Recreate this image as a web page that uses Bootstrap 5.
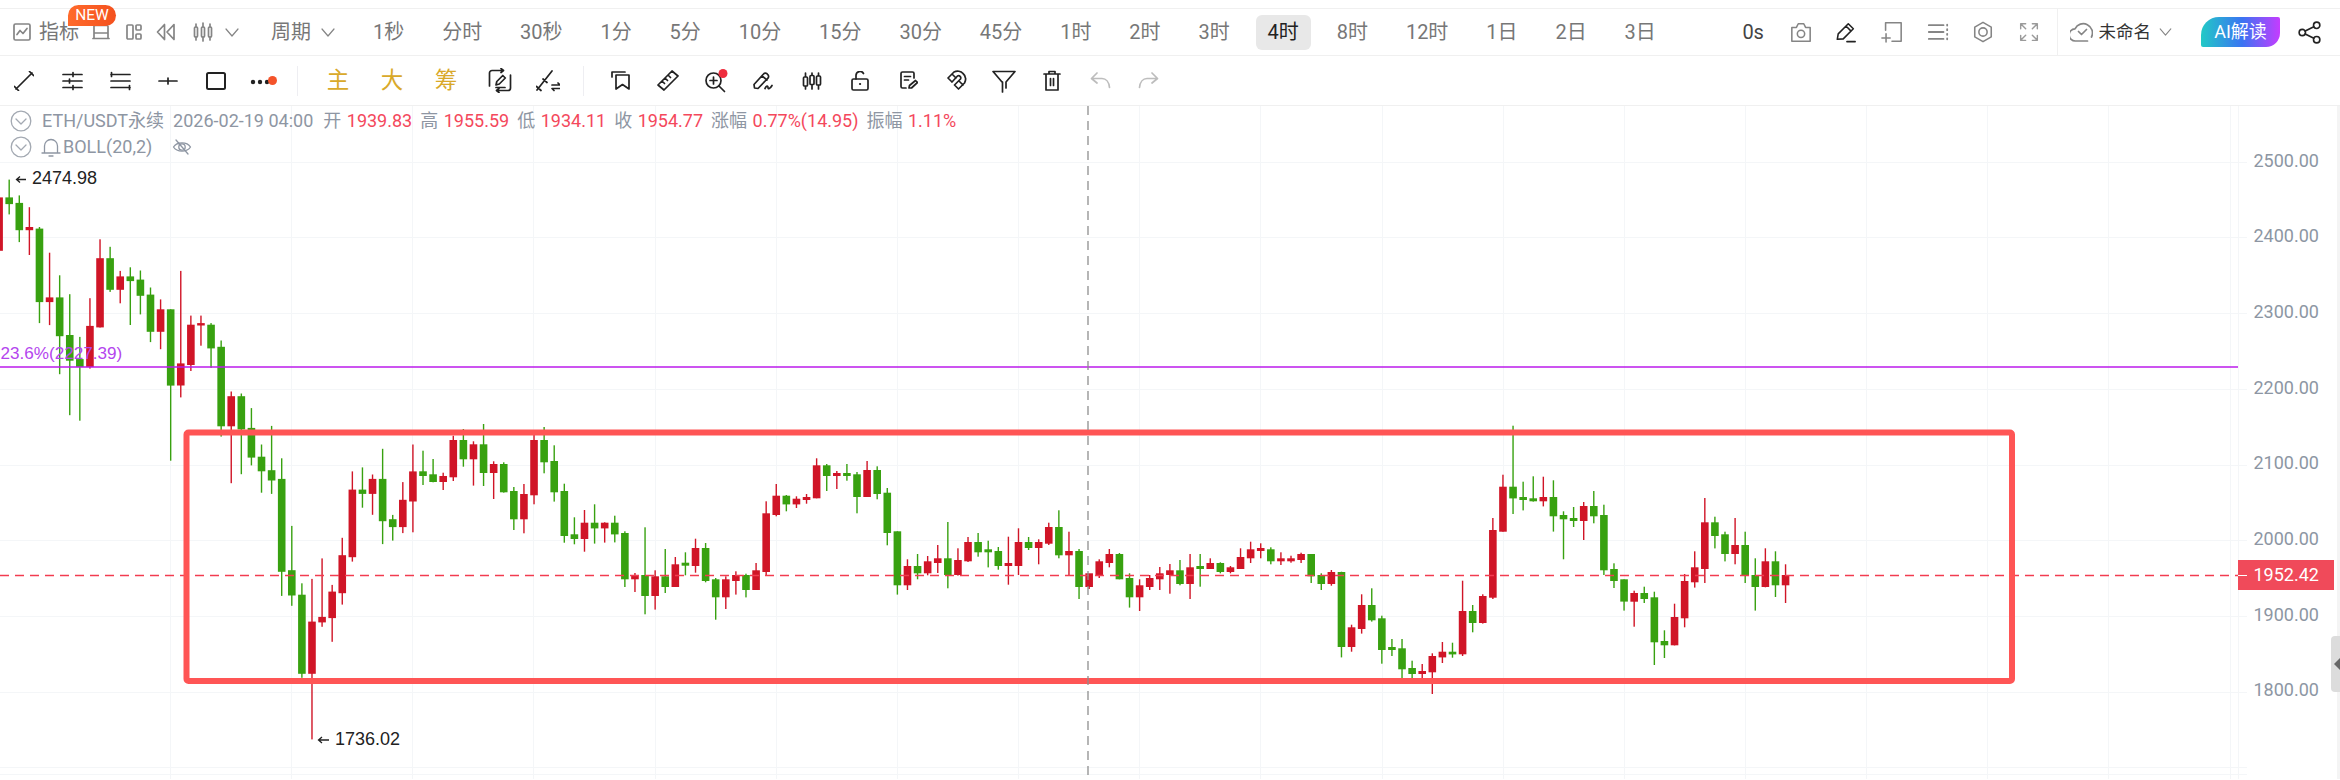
<!DOCTYPE html>
<html lang="zh-CN">
<head>
<meta charset="utf-8">
<title>ETH/USDT永续 K线</title>
<link href="https://cdn.jsdelivr.net/npm/bootstrap@5.3.0/dist/css/bootstrap.min.css" rel="stylesheet">
<style>
html,body{height:100%;}
body{background:#fff;overflow:hidden;font-family:Roboto,"Noto Sans CJK SC",sans-serif;color:#777;}
.app-shell{height:780px;padding-top:8px;}
.row-top{height:48px;border-top:1px solid #f0f0f0;border-bottom:1px solid #f0f0f0;font-size:20px;white-space:nowrap;}
.row-tools{height:50px;border-bottom:1px solid #f0f0f0;}
.tf-list{gap:13.9px;}
.tf-link{padding:0 12px;height:35px;line-height:35px;border-radius:6px;color:#777;text-decoration:none;}
.tf-link.is-on{background:#e8e8e8;color:#222;}
.ic{display:block;fill:none;stroke:currentColor;stroke-width:1.7;stroke-linecap:round;stroke-linejoin:round;}
.ic-grey{color:#858585;}
.ic-dark{color:#222;}
.ic-faint{color:#bdbdbd;}
.indicator-wrap{margin-left:13px;width:66px;}
.new-flag{position:absolute;left:55px;top:-12px;width:48px;height:21px;background:linear-gradient(90deg,#ff6b2c,#f4511e);border-radius:11px 11px 11px 0;color:#fff;font-size:15.5px;line-height:21px;text-align:center;}
.ind-text{margin-left:8px;}
.cell-48{width:48px;height:49px;}
.cell-54{width:54px;height:49px;font-size:22.5px;color:#d9a92a;}
.cell-46{width:45.6px;height:47px;}
.tool-div{width:1px;height:30px;background:#eeeef2;}
.tool-div-a{margin-left:9px;margin-right:13px;}
.tool-div-b{margin-left:11px;margin-right:12px;}
.cells-b{margin-left:3px;}
.count-s{color:#444;margin-right:14px;}
.head-div{width:1px;align-self:stretch;background:#f0f0f0;margin-left:5px;margin-right:12px;}
.save-name{font-size:17.5px;color:#333;margin-left:6px;margin-right:8px;}
.ai-tag{width:79px;height:30px;margin-left:29px;margin-right:18px;background:linear-gradient(90deg,#22c9c6 0%,#3a74f2 52%,#c53cff 100%);border-radius:18px 2px 14px 2px;color:#fff;font-size:18px;line-height:30px;text-align:center;}
.chart-stage{height:673px;position:relative;overflow:hidden;}
.chart-svg{position:absolute;left:0;top:0;display:block;}
.legend-box{position:absolute;left:10px;top:2px;font-size:18px;color:#8e96a3;line-height:26px;white-space:nowrap;}
.legend-line{height:26px;}
.legend-line .lg-v{color:#f4485c;margin-left:5.500px;margin-right:8px;}
.lg-name{margin-left:10px;margin-right:9px;}
.lg-time{margin-right:10px;}
.axis-col{margin-left:auto;width:99px;padding-top:16.6px;border-left:1px solid #f4f6f8;font-size:18px;color:#8d96a3;position:relative;}
.axis-tick{height:75.7px;line-height:75.7px;padding-left:14.5px;}
.price-tag{position:absolute;left:-1px;top:454px;width:96px;height:30px;background:#f04a5a;color:#fff;line-height:30px;padding-left:15.5px;}
.price-tag::before{content:"";position:absolute;left:0;top:14.5px;width:9px;height:1.5px;background:#fff;}
.gutter{width:3px;background:#f4f4f4;}
.side-handle{position:absolute;left:2331px;top:530px;width:9px;height:56px;background:#dcdcdc;border-radius:4px 0 0 4px;}
.side-handle svg{position:absolute;left:3px;top:20px;}
</style>
</head>
<body>
<div class="app-shell d-flex flex-column">

  <header class="row-top d-flex align-items-center">
    <div class="indicator-wrap position-relative d-flex align-items-center">
      <svg class="ic ic-grey" width="18" height="18" viewBox="0 0 18 18"><rect x="1" y="1" width="16" height="16" rx="1.5"/><path d="M4 11.5l3-4 3 3 4-5"/></svg>
      <span class="ind-text">指标</span>
      <span class="new-flag">NEW</span>
    </div>
    <svg class="ic ic-grey" width="18" height="16" viewBox="0 0 18 16" style="margin-left:13px"><path d="M2 14.5V3.500a1.500 1.500 0 0 1 1.500-2h11a1.500 1.500 0 0 1 1.500 2v11zM2 9h14M1 14.500h16"/></svg>
    <svg class="ic ic-grey" width="16" height="16" viewBox="0 0 16 16" style="margin-left:16px"><rect x="1" y="1" width="6" height="14" rx="1"/><rect x="10" y="1" width="5" height="5" rx="1"/><rect x="10" y="10" width="5" height="5" rx="1"/></svg>
    <svg class="ic ic-grey" width="20" height="18" viewBox="0 0 20 18" style="margin-left:14px"><path d="M8.500 1.500L1.500 9l7 7.500M18 1.500L11 9l7 7.500zM8.500 1.500v15"/></svg>
    <svg class="ic ic-grey" width="20" height="20" viewBox="0 0 20 20" style="margin-left:17px"><path d="M3 2v3M3 15v3M10 1v4M10 15v4M17 2v3M17 15v3"/><rect x="1.500" y="5" width="3" height="10" rx="1"/><rect x="8.500" y="5" width="3" height="10" rx="1"/><rect x="15.500" y="5" width="3" height="10" rx="1"/></svg>
    <svg class="ic ic-grey" width="14" height="9" viewBox="0 0 14 9" style="margin-left:12px;stroke-width:1.200"><path d="M1 1l6 7 6-7"/></svg>
    <span style="margin-left:32px">周期</span>
    <svg class="ic ic-grey" width="14" height="9" viewBox="0 0 14 9" style="margin-left:10px;stroke-width:1.200"><path d="M1 1l6 7 6-7"/></svg>
    <nav class="nav tf-list d-flex" style="margin-left:26px">
      <a class="tf-link" href="#">1秒</a><a class="tf-link" href="#">分时</a><a class="tf-link" href="#">30秒</a><a class="tf-link" href="#">1分</a><a class="tf-link" href="#">5分</a><a class="tf-link" href="#">10分</a><a class="tf-link" href="#">15分</a><a class="tf-link" href="#">30分</a><a class="tf-link" href="#">45分</a><a class="tf-link" href="#">1时</a><a class="tf-link" href="#">2时</a><a class="tf-link" href="#">3时</a><a class="tf-link is-on" href="#">4时</a><a class="tf-link" href="#">8时</a><a class="tf-link" href="#">12时</a><a class="tf-link" href="#">1日</a><a class="tf-link" href="#">2日</a><a class="tf-link" href="#">3日</a>
    </nav>
    <div class="ms-auto d-flex align-items-center h-100">
      <span class="count-s">0s</span>
      <div class="cell-46 d-flex align-items-center justify-content-center ic-grey"><svg class="ic" width="22" height="22" viewBox="0 0 24 24"><path d="M2 7h5l2-4h6l2 4h5v15H2z"/><circle cx="12" cy="14" r="4"/></svg></div>
      <div class="cell-46 d-flex align-items-center justify-content-center ic-dark"><svg class="ic" width="22" height="22" viewBox="0 0 24 24"><path d="M2.500 20l1-6L14.500 3l5.500 5.500L9 19.500zM12 5.500l5.500 5.500M13 22.500h9"/></svg></div>
      <div class="cell-46 d-flex align-items-center justify-content-center ic-grey"><svg class="ic" width="22" height="22" viewBox="0 0 24 24"><path d="M5 10V2h17v20H12M1 18.500h9M5.500 14v9"/></svg></div>
      <div class="cell-46 d-flex align-items-center justify-content-center ic-grey"><svg class="ic" width="22" height="22" viewBox="0 0 24 24" style="stroke-width:2"><path d="M2 4.500h16M2 12h16M2 19.500h16M22 4v1M22 9v1M22 14v1M22 19v1"/></svg></div>
      <div class="cell-46 d-flex align-items-center justify-content-center ic-grey"><svg class="ic" width="22" height="22" viewBox="0 0 24 24"><path d="M12 1.500l9 5.200v10.600l-9 5.200-9-5.200V6.700z"/><circle cx="12" cy="12" r="4.500"/></svg></div>
      <div class="cell-46 d-flex align-items-center justify-content-center ic-faint" style="color:#9a9a9a"><svg class="ic" width="20" height="20" viewBox="0 0 24 24"><path d="M2 8V2h6M2 2l6 6M22 8V2h-6M22 2l-6 6M2 16v6h6M2 22l6-6M22 16v6h-6M22 22l-6-6"/></svg></div>
      <div class="head-div"></div>
      <svg class="ic ic-grey" width="23" height="20" viewBox="0 0 23 20"><path d="M21.500 15A9 9 0 1 0 5 6.800 4.600 4.600 0 0 0 5.500 19h12"/><path d="M8.500 9.500l3 3 5-5"/></svg>
      <span class="save-name">未命名</span>
      <svg class="ic ic-grey" width="13" height="8" viewBox="0 0 14 9" style="stroke-width:1.200"><path d="M1 1l6 7 6-7"/></svg>
      <div class="ai-tag">AI解读</div>
      <svg class="ic ic-dark" width="23" height="23" viewBox="0 0 24 24" style="margin-right:19px"><circle cx="19.500" cy="4.500" r="3.300"/><circle cx="4.500" cy="12" r="3.300"/><circle cx="19.500" cy="19.500" r="3.300"/><path d="M7.500 10.500l9-4.500M7.500 13.500l9 4.500"/></svg>
    </div>
  </header>

  <div class="row-tools d-flex align-items-center ic-dark">
    <div class="d-flex">
      <div class="cell-48 d-flex align-items-center justify-content-center"><svg class="ic" width="20" height="20" viewBox="0 0 20 20"><path d="M2 18L18 2M.500 15.500L4.500 19.500M15.500.5l4 4"/></svg></div>
      <div class="cell-48 d-flex align-items-center justify-content-center"><svg class="ic" width="21" height="20" viewBox="0 0 21 20"><path d="M1 3.500h19M1 10h19M1 16.500h19M11 1.500v4M7.500 8v4M11 14.500v4"/></svg></div>
      <div class="cell-48 d-flex align-items-center justify-content-center"><svg class="ic" width="21" height="20" viewBox="0 0 21 20"><path d="M1 3.500h19M1 10h19M1 16.500h19M1.500 1.500v4M19.500 14.500v4"/></svg></div>
      <div class="cell-48 d-flex align-items-center justify-content-center"><svg class="ic" width="20" height="8" viewBox="0 0 20 8"><path d="M1 4h18M10 1v6"/></svg></div>
      <div class="cell-48 d-flex align-items-center justify-content-center"><svg class="ic" width="20" height="18" viewBox="0 0 20 18" style="stroke-width:2"><rect x="1" y="1" width="18" height="16" rx="1.500"/></svg></div>
      <div class="cell-48 d-flex align-items-center justify-content-center"><svg width="28" height="14" viewBox="0 0 28 14"><circle cx="3" cy="8" r="2.200" fill="#222"/><circle cx="10" cy="8" r="2.200" fill="#222"/><circle cx="17" cy="8" r="2.200" fill="#222"/><circle cx="22.500" cy="6.500" r="4.500" fill="#f4532a"/></svg></div>
    </div>
    <div class="tool-div tool-div-a"></div>
    <div class="d-flex">
      <div class="cell-54 d-flex align-items-center justify-content-center">主</div>
      <div class="cell-54 d-flex align-items-center justify-content-center">大</div>
      <div class="cell-54 d-flex align-items-center justify-content-center">筹</div>
    </div>
    <div class="d-flex cells-b">
      <div class="cell-48 d-flex align-items-center justify-content-center"><svg class="ic" width="24" height="25" viewBox="0 0 24 25"><path d="M15 2.500H4a2.500 2.500 0 0 0-2.500 2.500v13M9 22.500h11a2.500 2.500 0 0 0 2.500-2.500V7M13 .5l2.500 2-2.500 2M11 20.500l-2.500 2 2.500 2M8 17l.8-3.500 6-6 2.500 2.500-6 6zM8 19.500h9"/></svg></div>
      <div class="cell-48 d-flex align-items-center justify-content-center"><svg class="ic" width="24" height="22" viewBox="0 0 24 22"><path d="M1 20L16 1M.5 16.500l4.500 4M7 9l4 3.500M16 15h8l-2-2M24 18.500h-8l2 2"/></svg></div>
    </div>
    <div class="tool-div tool-div-b"></div>
    <div class="d-flex">
      <div class="cell-48 d-flex align-items-center justify-content-center"><svg class="ic" width="19" height="19" viewBox="0 0 19 19"><path d="M1 6V1h13M5 4h13v14l-6.500-4.500L5 18z"/></svg></div>
      <div class="cell-48 d-flex align-items-center justify-content-center"><svg class="ic" width="22" height="21" viewBox="0 0 22 21"><path d="M1 15L15 1l6 5L7 20zM5 11l2.500 2.500M8 8l2.500 2.500M11 5l2.500 2.500"/></svg></div>
      <div class="cell-48 d-flex align-items-center justify-content-center position-relative"><svg class="ic" width="24" height="24" viewBox="0 0 24 24"><circle cx="9.500" cy="11.500" r="7.500"/><path d="M9.500 8v7M6 11.500h7M15 17l5.500 5.500"/><circle cx="19" cy="4.500" r="4.500" fill="#ee2d3d" stroke="none"/></svg></div>
      <div class="cell-48 d-flex align-items-center justify-content-center"><svg class="ic" width="22" height="20" viewBox="0 0 22 20"><path d="M1.500 17l-.5-3.500L10.500 3a2.500 2.500 0 0 1 4 .2l.6.8a2.500 2.500 0 0 1-.5 3.500L5 17.500zM9 5l5 4M12 17.500c1.500-3 3-3 3-1s2 1.500 4-2"/></svg></div>
      <div class="cell-48 d-flex align-items-center justify-content-center"><svg class="ic" width="20" height="18" viewBox="0 0 20 18"><path d="M3.500 1v16M10 1v16M16.500 1v16"/><rect x="1.500" y="5" width="4" height="9" rx="1" fill="#fff"/><rect x="8" y="3.500" width="4" height="9" rx="1" fill="#fff"/><rect x="14.500" y="4" width="4" height="9" rx="1" fill="#fff"/></svg></div>
      <div class="cell-48 d-flex align-items-center justify-content-center"><svg class="ic" width="18" height="20" viewBox="0 0 18 20"><rect x="1" y="8" width="16" height="11" rx="1.500"/><path d="M5 8V4.500a4 4 0 0 1 7.500-2"/><path d="M9 13h.1" stroke-width="2.200"/></svg></div>
      <div class="cell-48 d-flex align-items-center justify-content-center"><svg class="ic" width="19" height="19" viewBox="0 0 19 19"><path d="M15 7V2.500a1.500 1.500 0 0 0-1.500-1.500h-10A1.500 1.500 0 0 0 2 2.500v13A1.500 1.500 0 0 0 3.500 17H7M5.500 5.500h6M5.500 9h4M10 17l.5-2.500 6-5 2 2-6 5.500z"/></svg></div>
      <div class="cell-48 d-flex align-items-center justify-content-center"><svg class="ic" width="21" height="21" viewBox="0 0 21 21"><path d="M2 8l6-6c3-1.500 7-1 9 1.500 3 2.500 3 6.500 1.500 9.500l-6 6-4-4 6-6c1-2 -1-4-3-3L6 12zM6 4l4 4M13 11l4 4"/></svg></div>
      <div class="cell-48 d-flex align-items-center justify-content-center"><svg class="ic" width="24" height="24" viewBox="0 0 24 24"><path d="M1 2.500h22L14 13v6M10 13L1.500 3M10.500 13v10"/></svg></div>
      <div class="cell-48 d-flex align-items-center justify-content-center"><svg class="ic" width="18" height="21" viewBox="0 0 18 21"><path d="M1 4h16M6 4V1.500h6V4M3 4v16h12V4M7.500 8.500v7M10.500 8.500v7"/></svg></div>
      <div class="cell-48 d-flex align-items-center justify-content-center ic-faint"><svg class="ic" width="21" height="18" viewBox="0 0 21 18"><path d="M7 1L1.500 6.500 7 11M2 6.500h10c4 0 7 3.500 7.500 9"/></svg></div>
      <div class="cell-48 d-flex align-items-center justify-content-center ic-faint"><svg class="ic" width="21" height="18" viewBox="0 0 21 18"><path d="M14 1l5.500 5.500L14 11M19 6.500H9C5 6.500 2 10 1.500 15.500"/></svg></div>
    </div>
  </div>

  <main class="chart-stage d-flex">
    <svg id="plot" class="chart-svg" width="2340" height="673" viewBox="0 107 2340 673" font-family="Liberation Sans, sans-serif" font-size="18">
      <g id="grid" stroke="#f4f6f8" stroke-width="1"></g>
      <g id="bars"></g>
      <line x1="0" y1="576.500" x2="2247" y2="576.500" stroke="#f23c50" stroke-width="1.400" stroke-dasharray="9 6"/>
      <line x1="0" y1="368" x2="2238" y2="368" stroke="#bb1beb" stroke-width="1.600"/>
      <text x="0.500" y="360" fill="#b445ee" font-size="17.100">23.6%(2227.39)</text>
      <rect x="186.500" y="433.500" width="1825.500" height="248.500" rx="2" fill="none" stroke="#ff5555" stroke-width="6"/>
      <line x1="1088" y1="107" x2="1088" y2="780" stroke="#8f8f8f" stroke-width="1.300" stroke-dasharray="9 6"/>
      <path d="M26 180.500H16.500M20 177.500l-3.500 3 3.500 3" fill="none" stroke="#222" stroke-width="1.300"/>
      <text x="32" y="184.500" fill="#222">2474.98</text>
      <path d="M329 741H318.500M322 738l-3.500 3 3.500 3" fill="none" stroke="#222" stroke-width="1.300"/>
      <text x="335" y="745.500" fill="#222">1736.02</text>
    </svg>

    <div class="legend-box">
      <div class="legend-line d-flex align-items-center">
        <svg class="ic" width="22" height="22" viewBox="0 0 22 22" style="color:#a3a9b2;stroke-width:1.300"><circle cx="11" cy="11" r="9.800"/><path d="M6 9l5 5 5-5"/></svg>
        <span class="lg-name">ETH/USDT永续</span><span class="lg-time">2026-02-19 04:00</span>
        <span>开</span><span class="lg-v">1939.83</span><span>高</span><span class="lg-v">1955.59</span><span>低</span><span class="lg-v">1934.11</span><span>收</span><span class="lg-v">1954.77</span><span>涨幅</span><span class="lg-v">0.77%(14.95)</span><span>振幅</span><span class="lg-v">1.11%</span>
      </div>
      <div class="legend-line d-flex align-items-center">
        <svg class="ic" width="22" height="22" viewBox="0 0 22 22" style="color:#a3a9b2;stroke-width:1.300"><circle cx="11" cy="11" r="9.800"/><path d="M6 9l5 5 5-5"/></svg>
        <svg class="ic" width="20" height="20" viewBox="0 0 20 20" style="margin-left:9px;stroke-width:1.300"><path d="M1 16h18M3.500 16V9a6.500 6.500 0 0 1 13 0v7M8 19h4"/></svg>
        <span style="margin-left:2px">BOLL(20,2)</span>
        <svg class="ic" width="20" height="20" viewBox="0 0 20 20" style="margin-left:20px;stroke-width:1.300"><path d="M1.500 10C5 4.500 15 4.500 18.500 10 15 15.500 5 15.500 1.500 10zM4 3l12 14"/><circle cx="10" cy="10" r="3.200"/></svg>
      </div>
    </div>

    <div class="axis-col">
      <div class="axis-tick">2500.00</div>
      <div class="axis-tick">2400.00</div>
      <div class="axis-tick">2300.00</div>
      <div class="axis-tick">2200.00</div>
      <div class="axis-tick">2100.00</div>
      <div class="axis-tick">2000.00</div>
      <div class="axis-tick">1900.00</div>
      <div class="axis-tick">1800.00</div>
      <div class="price-tag">1952.42</div>
    </div>
    <div class="gutter"></div>
    <div class="side-handle"><svg width="6" height="16" viewBox="0 0 6 16"><path d="M6 2L0 8l6 6z" fill="#666"/></svg></div>
  </main>
</div>

<script>
(function(){
  var NS='http://www.w3.org/2000/svg';
  function el(parent,name,attrs){var e=document.createElementNS(NS,name);for(var k in attrs){e.setAttribute(k,attrs[k]);}parent.appendChild(e);}
  // colour, wick top, body top, body bottom, wick bottom
  var first="R97 97 232 260;G52 97 114 140;G92 111 180 210;R122 172 180 243;G172 176 362 415;R237 350 362 420;G294 350 448 544;G342 445 510 648;G450 506 526 662;R352 422 526 530;R203 251 426 426;G222 251 331 336;R283 297 331 365;G274 297 309 420;G282 305 346 393;G325 343 437 463;R355 380 437 481;G380 380 573 763;R283 517 573 603;R396 419 521 536;R396 415 421 472;G415 419 479 528;G459 475 676 702;R588 600 676 820;G593 600 684 797;G630 680 755 775;G722 753 790 844;G675 787 813 847;G757 809 1044 1105;G928 1040 1104 1130;G1073 1102 1302 1312;R1062 1170 1302 1468;R1010 1158 1172 1183;R1077 1094 1161 1221;R958 1002 1098 1127;R790 836 1007 1018;G780 836 847 882;R798 809 847 900;G733 809 916 974;G900 911 931 965;R817 862 931 946;R722 790 866 944";
  var rest="G155 217 231 258;G180 226 249 250;R221 231 249 273;R110 123 235 246;G90 123 181 203;R127 136 181 260;G75 136 222 261;R187 195 222 300;G190 195 280 281;G264 276 361 393;R255 285 361 403;R108 123 289 316;G84 123 190 223;G139 186 280 308;G254 276 411 431;G355 406 420 436;R333 371 420 458;G316 371 388 434;R370 371 388 431;G350 371 406 430;G397 402 541 564;R522 528 541 579;G385 528 591 646;R514 532 591 632;G450 532 564 582;R474 496 564 564;G460 491 500 529;R419 447 501 521;G432 447 546 550;G537 541 595 662;R532 541 595 630;R517 528 546 587;G524 528 573 595;R492 514 573 573;R307 343 519 528;R255 290 348 352;G288 290 316 337;R292 299 316 327;R285 294 303 314;R178 199 298 298;G195 199 231 276;R216 222 231 270;G195 222 231 245;G219 226 294 343;R186 213 294 294;G202 213 285 301;G267 281 402 439;G397 397 559 587;R481 501 559 573;G465 501 523 541;R471 487 523 529;R438 478 492 522;G369 478 528 568;R448 483 528 530;R414 429 487 489;G402 429 460 473;G425 451 460 505;G444 456 501 512;R413 492 501 557;R388 429 501 528;G414 429 447 453;R421 429 447 496;R371 384 434 438;G334 384 469 478;R398 456 469 528;G450 456 564 600;R525 523 564 570;R481 487 528 537;R450 465 492 505;G462 465 541 541;G523 537 595 626;R541 559 595 636;R528 537 564 573;R504 523 541 573;R495 514 528 584;G483 514 555 559;R465 505 555 600;G465 501 510 563;R478 492 510 510;G490 492 519 523;R501 505 519 523;R448 474 510 510;R428 451 478 492;R433 447 456 478;G445 451 487 496;R460 478 487 498;R470 478 487 491;R461 465 483 492;G465 465 532 552;G523 528 555 573;R513 519 555 560;G518 519 744 775;R677 685 744 758;R586 618 690 704;G568 618 664 668;G650 658 753 794;G720 744 753 771;G720 748 811 837;G785 807 825 837;R795 816 825 837;R763 771 820 885;R729 758 775 792;G731 758 766 776;R545 636 766 771;G618 636 672 700;R586 591 672 674;R357 393 596 600;R227 263 398 398;G80 263 298 345;G248 294 303 334;G232 298 307 308;R233 294 307 322;G244 294 352 398;G337 348 361 481;G324 357 366 384;R309 321 366 423;G276 321 352 373;G317 348 514 528;G493 510 546 567;G541 541 608 635;R575 582 608 683;G563 582 600 612;G578 595 730 798;G694 726 739 777;R614 654 739 739;R525 546 658 685;R457 505 550 566;R297 370 510 552;G353 370 411 448;G398 406 465 487;R357 438 465 496;G398 438 531 552;G478 528 564 635;R448 487 564 565;G457 487 559 594;R496 528 559 612";
  var grid=document.getElementById('grid'),bars=document.getElementById('bars'),i;
  for(i=0;i<9;i++){var y=Math.round(162.7+75.7*i)+.5;el(grid,'line',{x1:0,y1:y,x2:2247,y2:y});}
  el(grid,'line',{x1:0,y1:775.5,x2:2247,y2:775.5});
  for(i=0;i<18;i++){var x=Math.round(170+121.15*i)+.5;el(grid,'line',{x1:x,y1:107,x2:x,y2:780});}
  function draw(list,start,map){
    list.split(';').forEach(function(s,k){
      var c=s.charAt(0)==='G'?'#38a110':'#d01527',v=s.slice(1).split(' ').map(Number),n=start+k;
      var cx=-.9+n*10.093;
      el(bars,'rect',{x:(cx-.7).toFixed(2),y:map(v[0]).toFixed(1),width:1.4,height:(map(v[3])-map(v[0])).toFixed(1),fill:c});
      el(bars,'rect',{x:(cx-3.8).toFixed(2),y:map(v[1]).toFixed(1),width:7.6,height:Math.max(map(v[2])-map(v[1]),2).toFixed(1),fill:c});
    });
  }
  draw(first,0,function(z){return 160+z/2.529;});
  draw(rest,42,function(z){return 400+z/3;});
})();
</script>
<script src="https://cdn.jsdelivr.net/npm/bootstrap@5.3.0/dist/js/bootstrap.bundle.min.js"></script>
</body>
</html>
